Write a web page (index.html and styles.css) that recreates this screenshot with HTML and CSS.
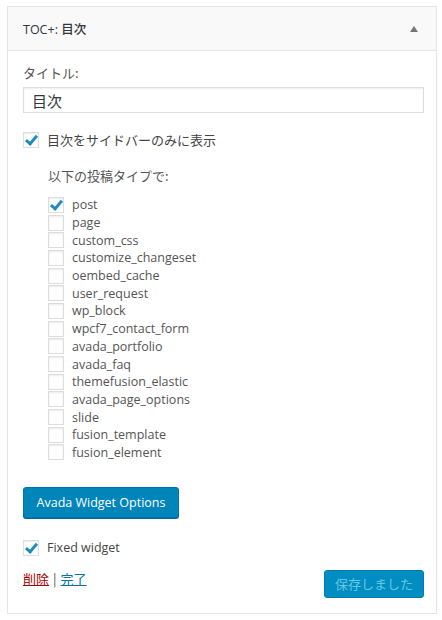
FILE: index.html
```html
<!DOCTYPE html>
<html lang="ja">
<head>
    <meta charset="UTF-8">
    <meta name="viewport" content="width=device-width, initial-scale=1.0">
    <title>TOC+ Widget</title>
    <link rel="stylesheet" href="styles.css">
</head>
<body>

    <div class="widget">
        <div class="widget-top">
            <h3 class="widget-title">TOC+: 目次</h3>
            <span class="toggle"></span>
        </div>
        <div class="widget-inside">
            <div class="field">
                <label class="field-label">タイトル:</label>
                <input class="text-input" type="text" value="目次">
            </div>

            <div class="check-row sidebar-only">
                <span class="box checked"></span>
                <span>目次をサイドバーのみに表示</span>
            </div>

            <div class="types">
                <div class="types-label">以下の投稿タイプで:</div>
                <ul class="type-list">
                    <li><span class="box checked"></span>post</li>
                    <li><span class="box"></span>page</li>
                    <li><span class="box"></span>custom_css</li>
                    <li><span class="box"></span>customize_changeset</li>
                    <li><span class="box"></span>oembed_cache</li>
                    <li><span class="box"></span>user_request</li>
                    <li><span class="box"></span>wp_block</li>
                    <li><span class="box"></span>wpcf7_contact_form</li>
                    <li><span class="box"></span>avada_portfolio</li>
                    <li><span class="box"></span>avada_faq</li>
                    <li><span class="box"></span>themefusion_elastic</li>
                    <li><span class="box"></span>avada_page_options</li>
                    <li><span class="box"></span>slide</li>
                    <li><span class="box"></span>fusion_template</li>
                    <li><span class="box"></span>fusion_element</li>
                </ul>
            </div>

            <div class="button primary options-button">Avada Widget Options</div>

            <div class="check-row fixed-widget">
                <span class="box checked"></span>
                <span>Fixed widget</span>
            </div>

            <div class="widget-control">
                <div class="control-links">
                    <a class="delete" href="#">削除</a><span class="sep">|</span><a class="close" href="#">完了</a>
                </div>
                <div class="button primary disabled">保存しました</div>
            </div>
        </div>
    </div>

</body>
</html>
```

FILE: styles.css
```css
body {
    margin: 0;
    background-color: #fff;
    color: #444;
    font-family: "Open Sans", "Noto Sans CJK JP", sans-serif;
    font-size: 12.5px;
}

.widget {
    width: 428px;
    margin: 6px 0 0 7px;
    border: 1px solid #e5e5e5;
    background-color: #fff;
}

.widget-top {
    display: flex;
    align-items: center;
    justify-content: space-between;
    height: 43px;
    padding: 0 15px;
    background-color: #f9f9f9;
    border-bottom: 1px solid #e5e5e5;
}

.widget-title {
    margin: 0;
    font-size: 12.5px;
    font-weight: 500;
    color: #32373c;
}

.toggle {
    width: 0;
    height: 0;
    margin-right: 3px;
    border-left: 4px solid transparent;
    border-right: 4px solid transparent;
    border-bottom: 6px solid #72777c;
}

.widget-inside {
    padding: 12px 12px 15px 15px;
}

.field-label {
    display: block;
    font-family: "Noto Sans CJK JP", sans-serif;
    font-size: 13px;
    line-height: 20px;
    color: #555;
}

.text-input {
    display: block;
    box-sizing: border-box;
    width: 401px;
    height: 26px;
    margin-top: 4px;
    padding: 0 8px;
    border: 1px solid #ddd;
    box-shadow: inset 0 1px 2px rgba(0, 0, 0, 0.07);
    font-family: "Noto Sans CJK JP", sans-serif;
    font-size: 15px;
    color: #32373c;
}

.check-row {
    display: flex;
    align-items: center;
    gap: 8px;
    line-height: 16px;
}

.check-row span:last-child {
    font-family: "Noto Sans CJK JP", sans-serif;
    font-size: 13px;
}

.fixed-widget span:last-child {
    font-family: "Open Sans", sans-serif;
    font-size: 12.5px;
}

.sidebar-only {
    margin-top: 19px;
}

.box {
    position: relative;
    flex: none;
    box-sizing: border-box;
    width: 16px;
    height: 16px;
    border: 1px solid #ddd;
    background-color: #fff;
    box-shadow: inset 0 1px 2px rgba(0, 0, 0, 0.08);
}

.box.checked::after {
    content: "";
    position: absolute;
    left: 4px;
    top: 0px;
    width: 4px;
    height: 9px;
    border-right: 3px solid #1e8cbe;
    border-bottom: 3px solid #1e8cbe;
    transform: rotate(40deg);
}

.types {
    padding-left: 25px;
}

.types-label {
    margin-top: 18px;
    font-family: "Noto Sans CJK JP", sans-serif;
    font-size: 13px;
    line-height: 20px;
    color: #555;
}

.type-list {
    list-style: none;
    margin: 10px 0 0;
    padding: 0;
}

.type-list li {
    display: flex;
    align-items: center;
    gap: 8px;
    height: 17.7px;
    color: #555;
}

.button {
    display: inline-block;
    box-sizing: border-box;
    border-radius: 3px;
    font-size: 12.5px;
    text-align: center;
    cursor: pointer;
}

.button.primary {
    background-color: #0085ba;
    border: 1px solid #0073aa;
    box-shadow: 0 1px 0 #006799;
    color: #fff;
}

.options-button {
    width: 156px;
    height: 31px;
    line-height: 29px;
    margin-top: 26px;
}

.fixed-widget {
    margin-top: 22px;
}

.widget-control {
    display: flex;
    justify-content: space-between;
    align-items: flex-start;
    margin-top: 14px;
}

.control-links {
    font-family: "Noto Sans CJK JP", sans-serif;
    font-size: 13px;
    line-height: 18px;
    color: #555;
}

.control-links a {
    text-decoration: underline;
}

.sep {
    margin: 0 4px;
}

.delete {
    color: #a00;
}

.close {
    color: #0073aa;
}

.button.disabled {
    width: 100px;
    height: 28px;
    line-height: 26px;
    background-color: #008ec2;
    border-color: #007cb2;
    box-shadow: none;
    color: #66c6e4;
    font-family: "Noto Sans CJK JP", sans-serif;
    font-size: 13px;
    cursor: default;
}
```
